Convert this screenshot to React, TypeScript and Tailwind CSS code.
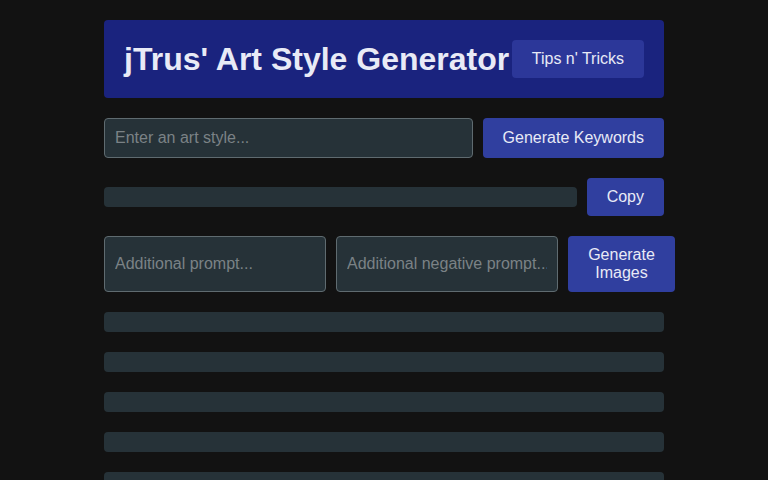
export default function App() {
  const bars = [0, 1, 2, 3, 4];
  return (
    <div className="min-h-screen bg-[#121212] font-['Liberation_Sans',Arial,sans-serif] text-[#e0e0e0]">
      <div className="mx-auto flex w-[560px] flex-col gap-5 pt-5">
        <header className="flex items-center justify-between rounded bg-[#1a237e] px-5 py-5">
          <h1 className="text-[32px] font-bold leading-[37px] text-[#e8eaf6]">
            jTrus' Art Style Generator
          </h1>
          <button className="rounded bg-[#2c3799] px-5 py-[10px] text-base leading-[18px] text-[#e8eaf6]">
            Tips n' Tricks
          </button>
        </header>

        <div className="flex gap-[10px]">
          <input
            className="h-10 flex-1 rounded border border-[#5f6b70] bg-[#263238] px-[10px] text-base text-[#e0e0e0] placeholder-[#7b8286] outline-none"
            placeholder="Enter an art style..."
          />
          <button className="rounded bg-[#303f9f] px-5 text-base text-[#e8eaf6]">
            Generate Keywords
          </button>
        </div>

        <div className="flex items-center gap-[10px]">
          <div className="h-5 flex-1 rounded bg-[#263238]" />
          <button className="h-[38px] rounded bg-[#303f9f] px-5 text-base text-[#e8eaf6]">
            Copy
          </button>
        </div>

        <div className="flex gap-[10px]">
          <input
            className="h-14 w-[222px] shrink-0 rounded border border-[#5f6b70] bg-[#263238] px-[10px] text-base text-[#e0e0e0] placeholder-[#7b8286] outline-none"
            placeholder="Additional prompt..."
          />
          <input
            className="h-14 w-[222px] shrink-0 rounded border border-[#5f6b70] bg-[#263238] px-[10px] text-base text-[#e0e0e0] placeholder-[#7b8286] outline-none"
            placeholder="Additional negative prompt..."
          />
          <button className="w-[107px] shrink-0 rounded bg-[#303f9f] px-5 text-base leading-[18px] text-[#e8eaf6]">
            Generate Images
          </button>
        </div>

        {bars.map((b) => (
          <div key={b} className="h-5 rounded bg-[#263238]" />
        ))}
      </div>
    </div>
  );
}
